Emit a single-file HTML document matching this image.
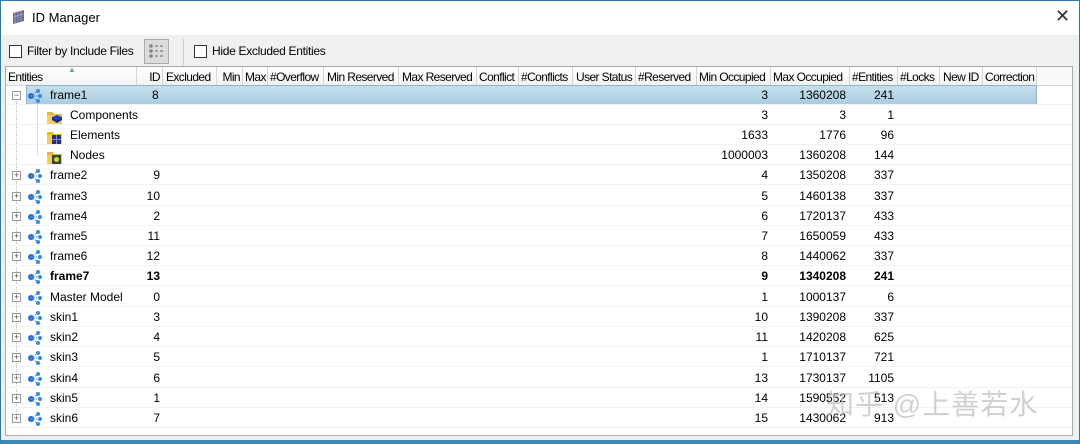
<!DOCTYPE html>
<html><head><meta charset="utf-8"><style>
*{margin:0;padding:0;box-sizing:border-box}
body{width:1080px;height:444px;overflow:hidden;background:#fff;font-family:"Liberation Sans",Arial,sans-serif;font-size:12px;color:#000;position:relative}
.win{position:absolute;left:0;top:0;width:1080px;height:444px;border:1px solid #2b79a8;border-bottom:4px solid #3a8ab8;background:#f0f0f0}
.title{position:absolute;left:0;top:0;width:1078px;height:34px;background:#fff}
.title .t{position:absolute;left:31px;top:9px;font-size:13px}
.x{position:absolute;left:1054px;top:5px;font-size:18px;color:#333}
.cb{position:absolute;width:13px;height:13px;border:1px solid #333;background:#fff}
.lbl{position:absolute;top:43px;font-size:12px;letter-spacing:-0.3px}
.grid{position:absolute;left:5px;top:66px;width:1068px;height:370px;background:#fff;border:1px solid #aaa}
.hdr{position:absolute;top:67px;height:19px;background:linear-gradient(#fff,#f1f2f4);border-right:1px solid #d5d5d5;border-bottom:1px solid #d5d5d5;font-size:12px;letter-spacing:-0.6px;padding-top:3px;white-space:nowrap;overflow:hidden}
.row{position:absolute;left:6px;width:1066px;height:20px;border-bottom:1px solid #f0f4f8}
.sel{background:linear-gradient(#c6dfec,#a9cde0);border:1px solid #8fb5cc;width:1011px}
.c{position:absolute;top:3px;white-space:nowrap}
.r{text-align:right}
.pm{position:absolute;left:6px;top:6px;width:9px;height:9px;border:1px solid #999;font-size:9px;line-height:7px;text-align:center;color:#555;background:#fff}
.ic{position:absolute;left:20px;top:3px}
</style></head><body>
<div class="win">
<div class="title">
<svg style="position:absolute;left:10px;top:8px" width="16" height="16"><path d="M2 4 L13 1 L13 12 L2 15Z" fill="#6a6a9a"/><path d="M4 4v10M7 3v10M10 2v10M2 8l11-3" stroke="#aab" stroke-width="0.8"/></svg>
<span class="t">ID Manager</span><span class="x">✕</span></div>
<div class="cb" style="left:8px;top:44px"></div><span class="lbl" style="left:26px">Filter by Include Files</span>
<div style="position:absolute;left:143px;top:38px;width:25px;height:25px;border:1px solid #aaa;background:#dcdcdc"><svg width="23" height="23"><g stroke="#666" stroke-width="1"><rect x="5" y="5" width="2" height="2" fill="none"/><rect x="5" y="10" width="2" height="2" fill="none"/><rect x="5" y="15" width="2" height="2" fill="none"/><path d="M10 6h3M15 6h3M10 11h3M15 11h3M10 16h3M15 16h3"/></g></svg></div>
<div style="position:absolute;left:182px;top:38px;width:1px;height:26px;background:#ccc"></div>
<div class="cb" style="left:193px;top:44px"></div><span class="lbl" style="left:211px">Hide Excluded Entities</span>
</div>
<div class="grid"></div>
<div class="hdr" style="left:6px;width:131px;padding-left:2px">Entities<span style="position:absolute;left:62px;top:-2px;font-size:8px;color:#6a8">▲</span></div>
<div class="hdr r" style="left:137px;width:26px;padding-right:2px">ID</div>
<div class="hdr" style="left:163px;width:54px;padding-left:3px">Excluded</div>
<div class="hdr r" style="left:217px;width:26px;padding-right:2px">Min</div>
<div class="hdr" style="left:243px;width:25px;padding-left:2px">Max</div>
<div class="hdr" style="left:268px;width:56px;padding-left:2px">#Overflow</div>
<div class="hdr" style="left:324px;width:75px;padding-left:3px">Min Reserved</div>
<div class="hdr" style="left:399px;width:78px;padding-left:3px">Max Reserved</div>
<div class="hdr" style="left:477px;width:42px;padding-left:2px">Conflict</div>
<div class="hdr" style="left:519px;width:54px;padding-left:2px">#Conflicts</div>
<div class="hdr" style="left:573px;width:63px;padding-left:3px">User Status</div>
<div class="hdr" style="left:636px;width:61px;padding-left:2px">#Reserved</div>
<div class="hdr" style="left:697px;width:74px;padding-left:2px">Min Occupied</div>
<div class="hdr" style="left:771px;width:79px;padding-left:2px">Max Occupied</div>
<div class="hdr" style="left:850px;width:48px;padding-left:2px">#Entities</div>
<div class="hdr" style="left:898px;width:42px;padding-left:2px">#Locks</div>
<div class="hdr" style="left:940px;width:43px;padding-left:3px">New ID</div>
<div class="hdr" style="left:983px;width:54px;padding-left:2px">Correction</div>
<div style="position:absolute;left:1037px;top:67px;width:35px;height:19px;background:#fafafa;border-bottom:1px solid #d5d5d5"></div>
<div style="position:absolute;left:16px;top:96px;width:0;height:320px;border-left:1px dotted #bbb"></div>
<div style="position:absolute;left:37px;top:104px;width:0;height:52px;border-left:1px dotted #bbb"></div>

<svg width="0" height="0" style="position:absolute"><defs><g id="fr"><circle cx="5" cy="8" r="3" fill="#2c6fd0"/><circle cx="12" cy="3" r="2" fill="#3a8ae0"/><circle cx="14" cy="8" r="2" fill="#3a8ae0"/><circle cx="12" cy="13" r="2" fill="#3a8ae0"/><path d="M5 8L12 3M5 8h9M5 8l7 5" stroke="#4a90e0" stroke-width="1" stroke-dasharray="1.5 1"/></g>
<g id="fd"><path d="M1 4h6l1 2h8v10H1z" fill="#e8b440"/><path d="M1 7h15v9H1z" fill="#f5cd5c"/></g></defs></svg>

<div class="row sel" style="top:85px;left:26px"></div>
<div class="row" style="top:85px;background:none">
<div class="pm">−</div><svg class="ic" width="18" height="16"><use href="#fr"/></svg>
<span class="c" style="left:44px">frame1</span><span class="c" style="left:146px">8</span>
<span class="c r" style="right:304px">3</span><span class="c r" style="right:226px">1360208</span><span class="c r" style="right:178px">241</span></div>

<div class="row" style="top:105px"><svg class="ic" style="left:40px" width="18" height="17"><use href="#fd"/><path d="M6 9l5-2 5 2-5 3z" fill="#2040c0"/><path d="M6 9v3l5 3 5-3V9l-5 3z" fill="#1a2a90"/></svg>
<span class="c" style="left:64px">Components</span><span class="c r" style="right:304px">3</span><span class="c r" style="right:226px">3</span><span class="c r" style="right:178px">1</span></div>
<div class="row" style="top:125px"><svg class="ic" style="left:40px" width="18" height="17"><use href="#fd"/><rect x="6" y="7" width="9" height="9" fill="#303070"/><path d="M10.5 7v9M6 11.5h9" stroke="#7090d0"/></svg>
<span class="c" style="left:64px">Elements</span><span class="c r" style="right:304px">1633</span><span class="c r" style="right:226px">1776</span><span class="c r" style="right:178px">96</span></div>
<div class="row" style="top:145px"><svg class="ic" style="left:40px" width="18" height="17"><use href="#fd"/><rect x="6" y="7" width="9" height="9" fill="#404040"/><circle cx="10.5" cy="11.5" r="2.5" fill="#c0e020"/></svg>
<span class="c" style="left:64px">Nodes</span><span class="c r" style="right:304px">1000003</span><span class="c r" style="right:226px">1360208</span><span class="c r" style="right:178px">144</span></div>

<div class="row" style="top:165px"><div class="pm">+</div><svg class="ic" width="18" height="16"><use href="#fr"/></svg><span class="c" style="left:44px">frame2</span><span class="c r" style="right:912px">9</span><span class="c r" style="right:304px">4</span><span class="c r" style="right:226px">1350208</span><span class="c r" style="right:178px">337</span></div>
<div class="row" style="top:186px"><div class="pm">+</div><svg class="ic" width="18" height="16"><use href="#fr"/></svg><span class="c" style="left:44px">frame3</span><span class="c r" style="right:912px">10</span><span class="c r" style="right:304px">5</span><span class="c r" style="right:226px">1460138</span><span class="c r" style="right:178px">337</span></div>
<div class="row" style="top:206px"><div class="pm">+</div><svg class="ic" width="18" height="16"><use href="#fr"/></svg><span class="c" style="left:44px">frame4</span><span class="c r" style="right:912px">2</span><span class="c r" style="right:304px">6</span><span class="c r" style="right:226px">1720137</span><span class="c r" style="right:178px">433</span></div>
<div class="row" style="top:226px"><div class="pm">+</div><svg class="ic" width="18" height="16"><use href="#fr"/></svg><span class="c" style="left:44px">frame5</span><span class="c r" style="right:912px">11</span><span class="c r" style="right:304px">7</span><span class="c r" style="right:226px">1650059</span><span class="c r" style="right:178px">433</span></div>
<div class="row" style="top:246px"><div class="pm">+</div><svg class="ic" width="18" height="16"><use href="#fr"/></svg><span class="c" style="left:44px">frame6</span><span class="c r" style="right:912px">12</span><span class="c r" style="right:304px">8</span><span class="c r" style="right:226px">1440062</span><span class="c r" style="right:178px">337</span></div>
<div class="row" style="top:266px;font-weight:bold"><div class="pm" style="font-weight:normal">+</div><svg class="ic" width="18" height="16"><use href="#fr"/></svg><span class="c" style="left:44px">frame7</span><span class="c r" style="right:912px">13</span><span class="c r" style="right:304px">9</span><span class="c r" style="right:226px">1340208</span><span class="c r" style="right:178px">241</span></div>
<div class="row" style="top:287px"><div class="pm">+</div><svg class="ic" width="18" height="16"><use href="#fr"/></svg><span class="c" style="left:44px">Master Model</span><span class="c r" style="right:912px">0</span><span class="c r" style="right:304px">1</span><span class="c r" style="right:226px">1000137</span><span class="c r" style="right:178px">6</span></div>
<div class="row" style="top:307px"><div class="pm">+</div><svg class="ic" width="18" height="16"><use href="#fr"/></svg><span class="c" style="left:44px">skin1</span><span class="c r" style="right:912px">3</span><span class="c r" style="right:304px">10</span><span class="c r" style="right:226px">1390208</span><span class="c r" style="right:178px">337</span></div>
<div class="row" style="top:327px"><div class="pm">+</div><svg class="ic" width="18" height="16"><use href="#fr"/></svg><span class="c" style="left:44px">skin2</span><span class="c r" style="right:912px">4</span><span class="c r" style="right:304px">11</span><span class="c r" style="right:226px">1420208</span><span class="c r" style="right:178px">625</span></div>
<div class="row" style="top:347px"><div class="pm">+</div><svg class="ic" width="18" height="16"><use href="#fr"/></svg><span class="c" style="left:44px">skin3</span><span class="c r" style="right:912px">5</span><span class="c r" style="right:304px">1</span><span class="c r" style="right:226px">1710137</span><span class="c r" style="right:178px">721</span></div>
<div class="row" style="top:368px"><div class="pm">+</div><svg class="ic" width="18" height="16"><use href="#fr"/></svg><span class="c" style="left:44px">skin4</span><span class="c r" style="right:912px">6</span><span class="c r" style="right:304px">13</span><span class="c r" style="right:226px">1730137</span><span class="c r" style="right:178px">1105</span></div>
<div class="row" style="top:388px"><div class="pm">+</div><svg class="ic" width="18" height="16"><use href="#fr"/></svg><span class="c" style="left:44px">skin5</span><span class="c r" style="right:912px">1</span><span class="c r" style="right:304px">14</span><span class="c r" style="right:226px">1590552</span><span class="c r" style="right:178px">513</span></div>
<div class="row" style="top:408px"><div class="pm">+</div><svg class="ic" width="18" height="16"><use href="#fr"/></svg><span class="c" style="left:44px">skin6</span><span class="c r" style="right:912px">7</span><span class="c r" style="right:304px">15</span><span class="c r" style="right:226px">1430062</span><span class="c r" style="right:178px">913</span></div>

<div style="position:absolute;left:826px;top:383px;font-family:'Liberation Sans','Noto Sans CJK SC',sans-serif;font-size:28px;letter-spacing:1px;color:rgba(190,190,190,0.7);white-space:nowrap">知乎 @上善若水</div>
</body></html>
